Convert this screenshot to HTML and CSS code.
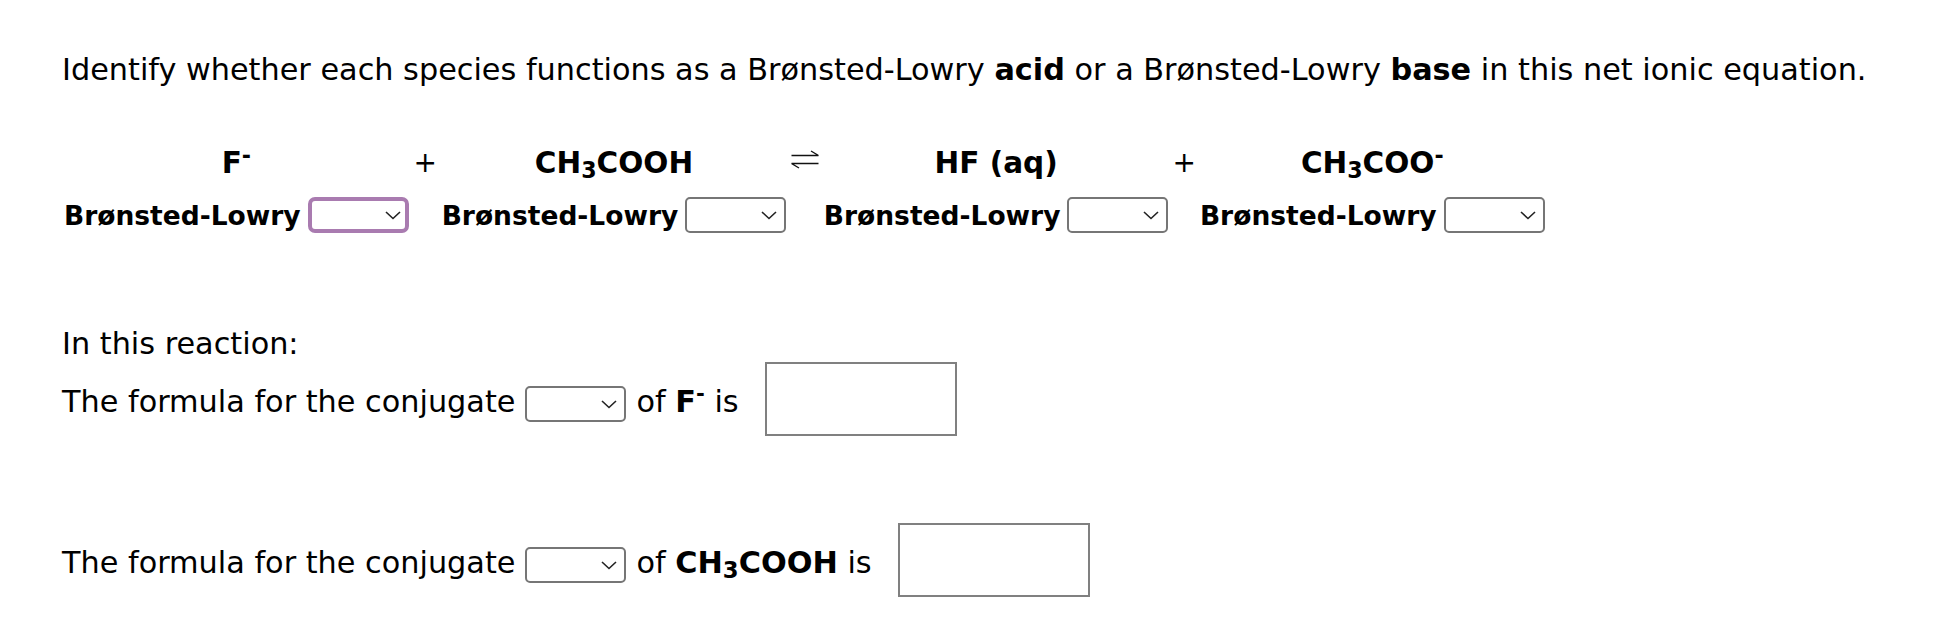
FILE: index.html
```html
<!DOCTYPE html>
<html>
<head>
<meta charset="utf-8">
<link rel="stylesheet" href="styles.css">
</head>
<body>
<div class="page">
  <p class="prompt">Identify whether each species functions as a Brønsted-Lowry <b>acid</b> or a Brønsted-Lowry <b>base</b> in this net ionic equation.</p>

  <div class="equation">
    <div class="species">F<sup>-</sup></div>
    <div class="op">+</div>
    <div class="species">CH<sub>3</sub>COOH</div>
    <div class="op">
      <svg class="harpoon" width="28" height="20" viewBox="0 0 28 20"><path d="M0.5 5.5 H27.5 M27.5 5.5 L20 1 M0.5 13.5 H27.5 M0.5 13.5 L8 18" fill="none" stroke="#111" stroke-width="1.4"/></svg>
    </div>
    <div class="species">HF (aq)</div>
    <div class="op">+</div>
    <div class="species">CH<sub>3</sub>COO<sup>-</sup></div>

    <div class="group"><span class="label">Brønsted-Lowry</span><div class="select focused"><svg class="chev" width="16" height="9" viewBox="0 0 16 9"><polyline points="1,1 8,7.5 15,1" fill="none" stroke="#222" stroke-width="1.6"/></svg></div></div>
    <div></div>
    <div class="group"><span class="label">Brønsted-Lowry</span><div class="select"><svg class="chev" width="16" height="9" viewBox="0 0 16 9"><polyline points="1,1 8,7.5 15,1" fill="none" stroke="#222" stroke-width="1.6"/></svg></div></div>
    <div></div>
    <div class="group"><span class="label">Brønsted-Lowry</span><div class="select"><svg class="chev" width="16" height="9" viewBox="0 0 16 9"><polyline points="1,1 8,7.5 15,1" fill="none" stroke="#222" stroke-width="1.6"/></svg></div></div>
    <div></div>
    <div class="group"><span class="label">Brønsted-Lowry</span><div class="select"><svg class="chev" width="16" height="9" viewBox="0 0 16 9"><polyline points="1,1 8,7.5 15,1" fill="none" stroke="#222" stroke-width="1.6"/></svg></div></div>
  </div>

  <div class="reaction">
    <p class="intro">In this reaction:</p>
    <div class="row first">
      <span class="txt">The formula for the conjugate</span>
      <div class="select small"><svg class="chev" width="16" height="9" viewBox="0 0 16 9"><polyline points="1,1 8,7.5 15,1" fill="none" stroke="#222" stroke-width="1.6"/></svg></div>
      <span class="txt">of <b>F<sup>-</sup></b> is</span>
      <div class="answer"></div>
    </div>
    <div class="row second">
      <span class="txt">The formula for the conjugate</span>
      <div class="select small"><svg class="chev" width="16" height="9" viewBox="0 0 16 9"><polyline points="1,1 8,7.5 15,1" fill="none" stroke="#222" stroke-width="1.6"/></svg></div>
      <span class="txt">of <b>CH<sub>3</sub>COOH</b> is</span>
      <div class="answer"></div>
    </div>
  </div>
</div>
</body>
</html>
```

FILE: styles.css
```css
html, body {
  margin: 0;
  background: #ffffff;
}

body {
  font-family: "DejaVu Sans", Verdana, sans-serif;
  font-size: 30.3px;
  color: #000;
}

.page {
  padding: 52px 0 0 62px;
}

.prompt {
  margin: 0;
  line-height: 36px;
}

.equation {
  margin: 55px 0 0 2px;
  display: grid;
  grid-template-columns: auto 33px auto 37.5px auto 31.5px auto;
  grid-template-rows: 40px 36px;
  justify-content: start;
  row-gap: 14px;
  align-items: center;
}

.species {
  font-weight: bold;
  font-size: 29.5px;
  text-align: center;
  line-height: 40px;
}

.species sup {
  font-size: 0.75em;
  vertical-align: 0.45em;
  line-height: 0;
}

sub {
  font-size: 0.75em;
  vertical-align: -0.22em;
  line-height: 0;
}

.op {
  display: flex;
  justify-content: center;
  align-items: center;
  line-height: 40px;
  font-size: 28px;
}

.harpoon {
  display: block;
  margin-top: -6px;
}

.group {
  display: flex;
  align-items: center;
  gap: 7px;
}

.label {
  font-weight: bold;
  font-size: 26.5px;
}

.select {
  box-sizing: border-box;
  width: 101px;
  height: 36px;
  border: 2px solid #767676;
  border-radius: 5px;
  background: #fff;
  display: flex;
  align-items: center;
  justify-content: flex-end;
  padding-right: 7px;
}

.select.focused {
  border: 4px solid #a97bb0;
  border-radius: 7px;
  padding-right: 4px;
}

.chev {
  display: block;
}

.reaction {
  margin-top: 93px;
}

.intro {
  margin: 0;
  line-height: 36px;
}

.row {
  display: flex;
  align-items: center;
}

.row.first {
  margin-top: 0;
}

.row.second {
  margin-top: 87px;
}

.row .txt {
  line-height: 36px;
  padding-top: 6px;
}

.row .select {
  margin: 10px 10px 0;
}

.row sup {
  font-size: 0.7em;
  vertical-align: 0.5em;
  line-height: 0;
}

.answer {
  box-sizing: border-box;
  width: 192px;
  height: 74px;
  border: 2px solid #808080;
  margin-left: 26px;
}
```
